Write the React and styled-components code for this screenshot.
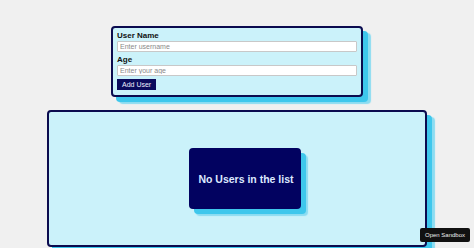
import React from "react";
import styled, { createGlobalStyle } from "styled-components";

const Global = createGlobalStyle`
  html, body { margin: 0; padding: 0; background: #f0f0f0; }
  body { font-family: "Liberation Sans", Arial, sans-serif; width: 474px; height: 248px; overflow: hidden; }
  * { box-sizing: border-box; }
`;

const Page = styled.div`
  position: relative;
  width: 474px;
  height: 248px;
  display: flex;
  flex-direction: column;
  align-items: center;
  padding-top: 26px;
`;

const Card = styled.div`
  background: #cbf2fa;
  border: 2px solid #0b0b4f;
  border-radius: 4px;
  box-shadow: 5px 5px 0 #3ec7ec, 8px 7px 1px #8bdcf1;
  width: ${(p) => p.$w}px;
`;

const FormCard = styled(Card)`
  height: 71px;
  padding: 2px 4px 0 4px;
  display: flex;
  flex-direction: column;
`;

const Label = styled.label`
  font-weight: 700;
  font-size: 8px;
  color: #111;
  line-height: 11px;
`;

const Input = styled.input`
  width: 100%;
  height: 11px;
  border: 1px solid #c8c8c8;
  border-radius: 1px;
  background: #fff;
  font-family: "Liberation Sans", Arial, sans-serif;
  font-size: 7px;
  padding: 0 2px;
  margin: 0 0 2px 0;
  outline: none;
  &::placeholder { color: #8a8a8a; }
`;

const Button = styled.button`
  align-self: flex-start;
  background: #0a0a5c;
  color: #eef;
  border: none;
  border-radius: 0;
  font-family: "Liberation Sans", Arial, sans-serif;
  font-size: 7px;
  height: 11px;
  padding: 0 5px;
  margin-top: 1px;
`;

const ListCard = styled(Card)`
  margin-top: 13px;
  height: 137px;
  display: flex;
  align-items: center;
  justify-content: center;
  padding-left: 16px;
`;

const Empty = styled.div`
  width: 112px;
  height: 61px;
  background: #020260;
  border-radius: 4px;
  box-shadow: 5px 5px 0 #3ec7ec, 7px 7px 1px #8bdcf1;
  display: flex;
  align-items: center;
  justify-content: center;
  padding-left: 2px;
  color: #dde9ff;
  font-weight: 700;
  font-size: 10.5px;
`;

const Sandbox = styled.div`
  position: absolute;
  right: 4px;
  bottom: 6px;
  background: #111;
  color: #eee;
  font-size: 6px;
  padding: 4px 5px;
  border-radius: 2px;
`;

export default function App() {
  return (
    <>
      <Global />
      <Page>
        <FormCard $w={252}>
          <Label>User Name</Label>
          <Input placeholder="Enter username" />
          <Label>Age</Label>
          <Input placeholder="Enter your age" />
          <Button>Add User</Button>
        </FormCard>
        <ListCard $w={380}>
          <Empty>No Users in the list</Empty>
        </ListCard>
        <Sandbox>Open Sandbox</Sandbox>
      </Page>
    </>
  );
}
